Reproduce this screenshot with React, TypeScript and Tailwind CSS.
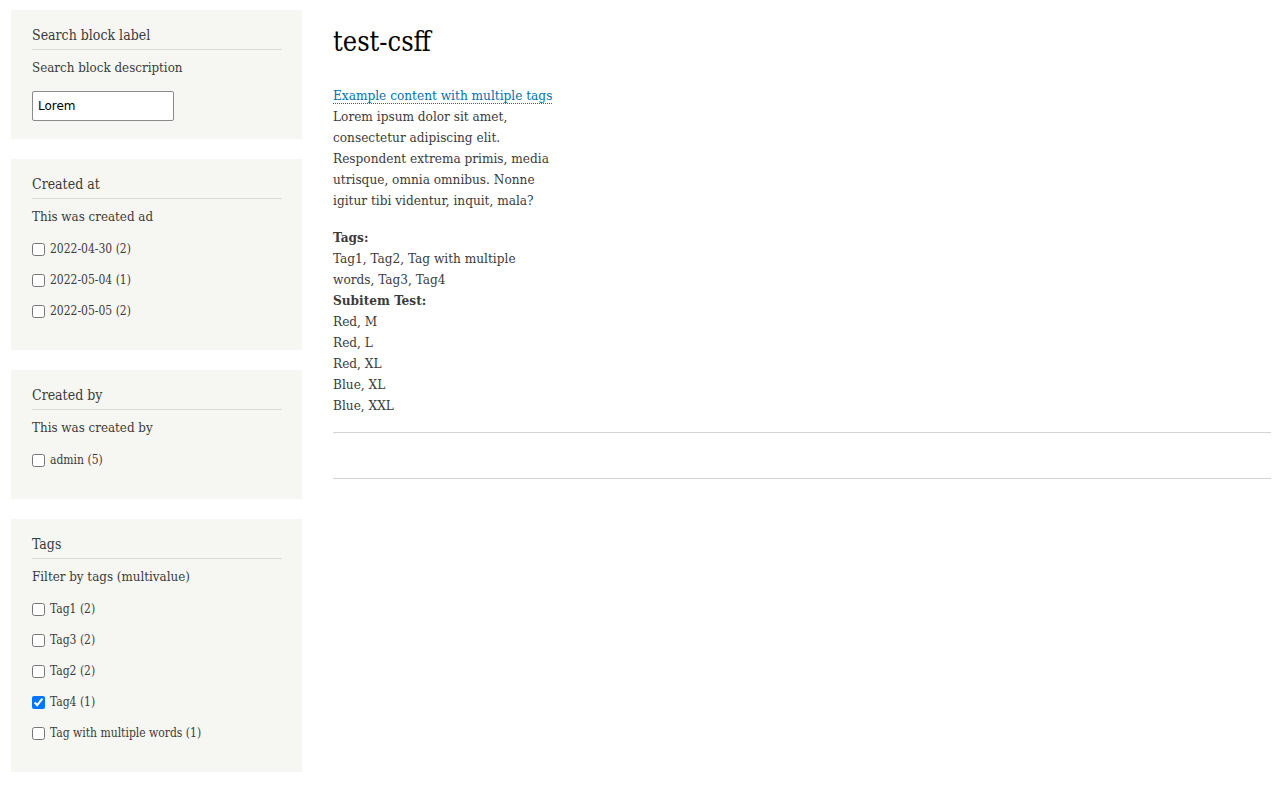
import { useState } from "react";

const serif = { fontFamily: '"DejaVu Serif Condensed", "DejaVu Serif", Georgia, serif', fontStretch: "condensed" };

type Option = { label: string; checked?: boolean };

function FacetBlock({ title, description, options }: { title: string; description: string; options: Option[] }) {
  const [state, setState] = useState(options.map((o) => !!o.checked));
  return (
    <section className="bg-[#f6f6f2] pt-[15px] pb-[29px] pl-[21px] pr-[20px]">
      <h2 className="text-[14px] leading-[20px] pb-[4px] border-b border-[#dcdcd6] text-[#3b3b3b] font-normal">{title}</h2>
      <p className="mt-[8px] text-[13.25px] leading-[20px] text-[#3b3b3b]">{description}</p>
      <ul className="mt-[12px] flex flex-col gap-[11px]">
        {options.map((opt, i) => (
          <li key={opt.label} className="flex items-center h-[20px]">
            <input
              type="checkbox"
              checked={state[i]}
              onChange={() => setState((s) => s.map((v, j) => (j === i ? !v : v)))}
              className="m-0 w-[13px] h-[13px] accent-[#0075ff]"
            />
            <label className="ml-[5px] text-[12px] leading-[20px] text-[#3b3b3b]">{opt.label}</label>
          </li>
        ))}
      </ul>
    </section>
  );
}

export default function App() {
  return (
    <div className="min-h-screen bg-white flex gap-[31px] pl-[11px] pr-[15px] pt-[10px]" style={serif}>
      <aside className="w-[291px] shrink-0 flex flex-col gap-[20px] pb-[16px]">
        <section className="bg-[#f6f6f2] pt-[15px] pb-[18px] pl-[21px] pr-[20px]">
          <h2 className="text-[14px] leading-[20px] pb-[4px] border-b border-[#dcdcd6] text-[#3b3b3b] font-normal">
            Search block label
          </h2>
          <p className="mt-[8px] text-[13.25px] leading-[20px] text-[#3b3b3b]">Search block description</p>
          <input
            type="text"
            defaultValue="Lorem"
            className="mt-[13px] block w-[142px] h-[30px] bg-white border border-[#8a8a8a] rounded-[2px] px-[5px] text-[12px] text-black outline-none"
            style={{ fontFamily: '"DejaVu Sans", Verdana, sans-serif', fontStretch: "normal" }}
          />
        </section>

        <FacetBlock
          title="Created at"
          description="This was created ad"
          options={[{ label: "2022-04-30 (2)" }, { label: "2022-05-04 (1)" }, { label: "2022-05-05 (2)" }]}
        />
        <FacetBlock title="Created by" description="This was created by" options={[{ label: "admin (5)" }]} />
        <FacetBlock
          title="Tags"
          description="Filter by tags (multivalue)"
          options={[
            { label: "Tag1 (2)" },
            { label: "Tag3 (2)" },
            { label: "Tag2 (2)" },
            { label: "Tag4 (1)", checked: true },
            { label: "Tag with multiple words (1)" },
          ]}
        />
      </aside>

      <main className="flex-1 pt-[14px]">
        <h1 className="text-[27px] leading-[36px] text-black font-normal">test-csff</h1>

        <article className="mt-[25px] w-[225px] text-[13.5px] leading-[21px] text-[#3b3b3b]">
          <a href="#" className="text-[#0071b3] border-b border-dotted border-[#0071b3]">
            Example content with multiple tags
          </a>
          <p>
            Lorem ipsum dolor sit amet, consectetur adipiscing elit. Respondent extrema primis, media utrisque, omnia
            omnibus. Nonne igitur tibi videntur, inquit, mala?
          </p>

          <div className="mt-[16px]">
            <div className="font-bold">Tags:</div>
            <div>Tag1, Tag2, Tag with multiple words, Tag3, Tag4</div>
            <div className="font-bold">Subitem Test:</div>
            <div>Red, M</div>
            <div>Red, L</div>
            <div>Red, XL</div>
            <div>Blue, XL</div>
            <div>Blue, XXL</div>
          </div>
        </article>

        <div className="mt-[16px] border-t border-[#d3d3d3] h-[46px]" />
        <div className="border-t border-[#d3d3d3]" />
      </main>
    </div>
  );
}
